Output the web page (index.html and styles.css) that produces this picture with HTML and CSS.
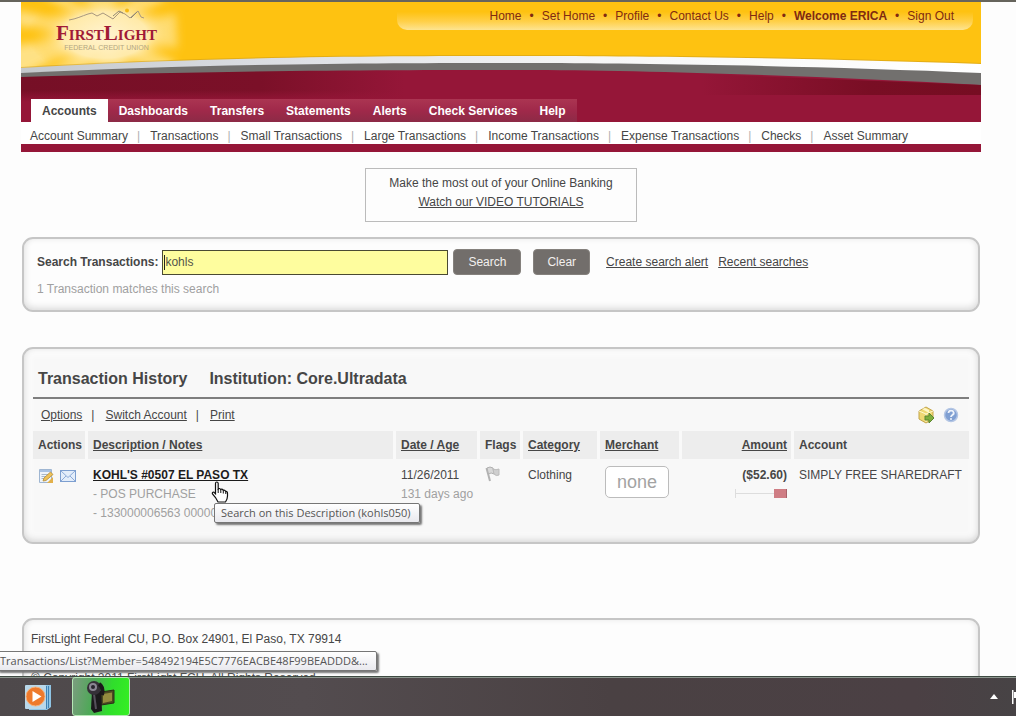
FILE: index.html
```html
<!DOCTYPE html>
<html lang="en">
<head>
<meta charset="utf-8">
<title>FirstLight Federal Credit Union - Transactions</title>
<link rel="stylesheet" href="styles.css">
</head>
<body>
<div class="viewport">
  <div class="page">
    <header class="banner">
      <svg class="banner-art" viewBox="0 0 960 120" preserveAspectRatio="none" aria-hidden="true">
        <defs>
          <linearGradient id="maroon" x1="0" x2="1" y1="0" y2="0">
            <stop offset="0" stop-color="#760f26"/><stop offset=".25" stop-color="#7b1028"/><stop offset=".4" stop-color="#951638"/><stop offset="1" stop-color="#951638"/>
          </linearGradient>
          <linearGradient id="shade" x1="0" x2="1" y1="0" y2="0">
            <stop offset="0" stop-color="#760d22" stop-opacity="0"/><stop offset=".6" stop-color="#760d22" stop-opacity=".9"/><stop offset="1" stop-color="#760d22"/>
          </linearGradient>
          <linearGradient id="fade" x1="0" x2="0" y1="0" y2="1">
            <stop offset="0" stop-color="#951638" stop-opacity="0"/><stop offset="1" stop-color="#951638"/>
          </linearGradient>
          <linearGradient id="silver" x1="0" x2="1" y1="0" y2="0">
            <stop offset="0" stop-color="#c4c8cc"/><stop offset=".3" stop-color="#dfe1e6"/><stop offset=".6" stop-color="#f6f6f6"/><stop offset="1" stop-color="#fff"/>
          </linearGradient>
          <radialGradient id="glow">
            <stop offset="0" stop-color="#fff3d0"/><stop offset=".55" stop-color="#ffedb4" stop-opacity=".9"/><stop offset="1" stop-color="#ffc20f" stop-opacity="0"/>
          </radialGradient>
          <filter id="soft" x="-20%" y="-40%" width="140%" height="180%"><feGaussianBlur stdDeviation="5"/></filter>
        </defs>
        <rect width="960" height="120" fill="#fec211"/>
        <g filter="url(#soft)" fill="#ffe79a" opacity=".85">
          <path d="M85 30L-10 44V75H0Z"/><path d="M85 30L14 80H58Z"/><path d="M85 30L70 80H118Z"/><path d="M85 30L135 76L155 60Z"/>
          <path d="M85 30L156 46L154 12Z"/><path d="M85 30L150 -6H112Z"/><path d="M85 30L98 -10H60Z"/><path d="M85 30L42 -10H16Z"/><path d="M85 30L-5 8V24Z"/>
        </g>
        <ellipse cx="84" cy="33" rx="78" ry="42" fill="url(#glow)"/>
        <path d="M0 65C200 53 380 53 500 53S800 55 960 61V120H0Z" fill="#c9981a" opacity=".5"/>
        <path d="M0 66C200 54 380 54 500 54S800 56 960 62V120H0Z" fill="url(#silver)"/>
        <path d="M0 71C200 61 380 61 500 61S800 64 960 71V120H0Z" fill="#72706e"/>
        <path d="M0 75C200 68 380 68 500 68S800 74 960 83V120H0Z" fill="url(#maroon)"/>
        <path d="M680 72L960 83V93H680Z" fill="url(#shade)"/>
        <rect y="88" width="420" height="12" fill="url(#fade)"/>
        <rect y="100" width="420" height="20" fill="#951638"/>
      </svg>
      <div class="banner-top">
        <a class="logo" href="#">
          <svg class="logo-hills" viewBox="0 0 78 14" aria-hidden="true">
            <circle cx="59" cy="2.6" r="2" fill="#f5b914"/>
            <path d="M1 12C8 11 14 8 20 6L24 5L29 8L35 5L40 8L45 11L52 4L57 6L62 10L70 3L73 9L76 10" fill="none" stroke="#a8977e" stroke-width="1"/>
            <path d="M45 8L51 3L55 5M63 10L69 4" fill="none" stroke="#8f8775" stroke-width="1"/>
          </svg>
          <span class="logo-name">FirstLight</span>
          <span class="logo-sub">FEDERAL CREDIT UNION</span>
        </a>
        <nav class="utility" aria-label="Utility">
          <a href="#">Home</a><span>•</span><a href="#">Set Home</a><span>•</span><a href="#">Profile</a><span>•</span><a href="#">Contact Us</a><span>•</span><a href="#">Help</a><span>•</span><b>Welcome ERICA</b><span>•</span><a href="#">Sign Out</a>
        </nav>
      </div>
      <nav class="tabs" aria-label="Main">
        <a class="active" href="#">Accounts</a><a href="#">Dashboards</a><a href="#">Transfers</a><a href="#">Statements</a><a href="#">Alerts</a><a href="#">Check Services</a><a href="#">Help</a>
      </nav>
    </header>
    <nav class="subnav" aria-label="Accounts">
      <a href="#">Account Summary</a><span>|</span><a href="#">Transactions</a><span>|</span><a href="#">Small Transactions</a><span>|</span><a href="#">Large Transactions</a><span>|</span><a href="#">Income Transactions</a><span>|</span><a href="#">Expense Transactions</a><span>|</span><a href="#">Checks</a><span>|</span><a href="#">Asset Summary</a>
    </nav>

    <aside class="promo">
      <p>Make the most out of your Online Banking</p>
      <a href="#">Watch our VIDEO TUTORIALS</a>
    </aside>

    <form class="panel search">
      <div class="search-row">
        <label for="q">Search Transactions:</label>
        <div class="field"><input id="q" type="text" value="kohls"><i class="caret"></i></div>
        <button class="btn" type="button">Search</button>
        <button class="btn btn-clear" type="button">Clear</button>
        <a class="alert-link" href="#">Create search alert</a>
        <a href="#">Recent searches</a>
      </div>
      <p class="result">1 Transaction matches this search</p>
    </form>

    <section class="panel history">
      <div class="titles">
        <h2>Transaction History</h2>
        <h2>Institution: Core.Ultradata</h2>
      </div>
      <div class="toolbar">
        <a href="#">Options</a><span>|</span><a href="#">Switch Account</a><span>|</span><a href="#">Print</a>
        <div class="tools">
          <svg width="18" height="18" viewBox="0 0 18 18" role="img" aria-label="Export">
            <path d="M2 5L9 1L16 5V13L9 17L2 13Z" fill="#efd873" stroke="#c4a54a"/>
            <path d="M2 5L9 8L16 5M9 8V16" fill="none" stroke="#fff8d0"/>
            <path d="M5 3L12 7L12 4L8 2Z" fill="#fff7c8"/>
            <path d="M8 10H12V7L17 12L12 17V14H8Z" fill="#7fae3c" stroke="#5c8730"/>
          </svg>
          <svg width="16" height="16" viewBox="0 0 16 16" role="img" aria-label="Help">
            <circle cx="8" cy="8" r="6.5" fill="#7f9fd2" stroke="#b4c6e4" stroke-width="1.5"/>
            <path d="M5.500 6a2.600 2.400 0 1 1 3.600 2.200Q8 9 8 10" fill="none" stroke="#eef3fb" stroke-width="1.800"/>
            <circle cx="8" cy="12" r="1" fill="#eef3fb"/>
          </svg>
        </div>
      </div>
      <table>
        <colgroup><col class="c-act"><col><col class="c-date"><col class="c-flag"><col class="c-cat"><col class="c-mer"><col class="c-amt"><col class="c-acc"></colgroup>
        <thead>
          <tr><th>Actions</th><th><a href="#">Description / Notes</a></th><th><a href="#">Date / Age</a></th><th>Flags</th><th><a href="#">Category</a></th><th><a href="#">Merchant</a></th><th class="num"><a href="#">Amount</a></th><th>Account</th></tr>
        </thead>
        <tbody>
          <tr>
            <td><div class="actions">
              <svg width="16" height="16" viewBox="0 0 16 16" role="img" aria-label="Edit">
                <path d="M1.500 1.500H13.500V14.500H1.500Z" fill="#eef4fb" stroke="#9fb6d2"/>
                <path d="M2 2H13V4H2Z" fill="#a9c3e4"/><path d="M3.500 6.500H11M3.500 8.500H9M3.500 10.500H7" stroke="#a8b8c8"/>
                <path d="M5 13L6 10L12.500 4L15 6.500L8 12.500Z" fill="#efc257" stroke="#b58b35" stroke-width=".8"/><path d="M9 15L15 9V15Z" fill="#e2b04a"/>
              </svg>
              <svg width="16" height="12" viewBox="0 0 16 12" role="img" aria-label="Mail">
                <rect x=".5" y=".5" width="15" height="11" fill="#e3edfa" stroke="#7d9fd0"/>
                <path d="M1 1L8 7.500L15 1M1 11L6 6M15 11L10 6" fill="none" stroke="#8cabd8"/>
              </svg>
            </div></td>
            <td>
              <div class="desc">
                <a class="payee" href="#">KOHL'S #0507 EL PASO TX</a>
                <p>- POS PURCHASE</p>
                <p>- 133000006563 000000</p>
                <div class="tooltip" role="tooltip">Search on this Description (kohls050)</div>
                <svg class="cursor" width="18" height="22" viewBox="0 0 18 22" aria-hidden="true">
                  <path d="M4.500 2.500Q4.500 1 5.800 1T7.200 2.500V8Q8.500 6.800 9.700 8.500Q11 7.500 12.200 9.200Q13.800 8.500 14.800 10.500Q16.500 10.200 16.500 12.500V15Q16.500 18 14.500 21H7L4.500 16.500L1.500 13Q.8 11 2.800 11L4.500 12.800Z" fill="#fff" stroke="#111" stroke-width="1.200"/>
                  <path d="M7.200 8V12M9.800 8.500V12M12.300 9.200V12.500M14.800 10.500V13" stroke="#111" fill="none"/>
                </svg>
              </div>
            </td>
            <td>11/26/2011<p class="muted">131 days ago</p></td>
            <td><svg width="16" height="16" viewBox="0 0 16 16" role="img" aria-label="Flag">
              <path d="M1.500 2L5 15" stroke="#b2b2b2" stroke-width="2"/><path d="M2 2Q5 0 8 2L9 8Q6 6 3.500 8Z" fill="#d8d8d8" stroke="#b0b0b0"/><path d="M8 3Q11 4.500 14 3V9Q11 10.500 9 8Z" fill="#cfcfcf" stroke="#bbb"/>
            </svg></td>
            <td>Clothing</td>
            <td><button class="none" type="button">none</button></td>
            <td class="num"><b>($52.60)</b><div class="meter"><i></i></div></td>
            <td>SIMPLY FREE SHAREDRAFT</td>
          </tr>
        </tbody>
      </table>
    </section>

    <footer class="panel foot">
      <p>FirstLight Federal CU, P.O. Box 24901, El Paso, TX 79914</p>
      <p class="copyright">© Copyright 2011 FirstLight FCU, All Rights Reserved.</p>
    </footer>
  </div>
  <div class="status">Transactions/List?Member=548492194E5C7776EACBE48F99BEADDD&amp;...</div>
</div>

<div class="taskbar">
  <button class="task" type="button" aria-label="Media player">
    <svg width="26" height="26" viewBox="0 0 26 26" aria-hidden="true">
      <path d="M4 1H26V23L22 26H4Z" fill="#8fc4e4"/><path d="M21.500 2V25M23.500 2V24" stroke="#3f82b4"/>
      <rect width="21" height="24" y="1" rx="1" fill="#b9d8ea"/>
      <circle cx="10.500" cy="12.500" r="9.500" fill="#ee7a2c" stroke="#f6b27c"/><path d="M7.500 7L16.500 12.500L7.500 18Z" fill="#fff"/>
    </svg>
  </button>
  <button class="task task-active" type="button" aria-label="Camcorder">
    <svg width="30" height="34" viewBox="0 0 30 34" aria-hidden="true">
      <path d="M15 12L28 10V23L15 25Z" fill="#4b4a22" stroke="#2b2e18"/><path d="M17 14L26 12.500V21L17 23Z" fill="#938b3f"/>
      <path d="M6 11H15L16 31L8 33L5 29Z" fill="#1b191b"/><path d="M8 14L10 29" stroke="#55505a" stroke-width="2"/>
      <circle cx="8" cy="8" r="7" fill="#353037"/><circle cx="7" cy="7" r="4" fill="#8b8694"/><circle cx="7" cy="7" r="2" fill="#29242e"/>
      <path d="M13 4Q18 7 16 15" fill="none" stroke="#1b191b" stroke-width="4"/>
    </svg>
  </button>
  <div class="tray">
    <svg width="8" height="5" viewBox="0 0 8 5" aria-hidden="true"><path d="M4 0L8 5H0Z" fill="#fff"/></svg>
    <svg width="4" height="14" viewBox="0 0 4 14" aria-hidden="true"><path d="M0 0H1.500V14H0ZM2 2H4V8H2Z" fill="#fff"/></svg>
  </div>
</div>
</body>
</html>
```
FILE: styles.css
```css
* { box-sizing: border-box; }

body {
  margin: 0;
  height: 100vh;
  display: flex;
  flex-direction: column;
  background: #fdfdfd;
  color: #464646;
  font: 12px/19px "Liberation Sans", Arial, sans-serif;
}

p, h2 { margin: 0; }
a { color: inherit; }
nav a { text-decoration: none; }
button, input { font: inherit; }
svg { display: block; }

.viewport {
  flex: 1;
  min-height: 0;
  position: relative;
  overflow: hidden;
  border-top: 2px solid #66645c;
}

.page { padding: 0 35px 0 21px; }

/* Banner */
.banner {
  position: relative;
  min-height: 120px;
  display: flex;
  flex-direction: column;
  justify-content: space-between;
}

.banner-art {
  position: absolute;
  inset: 0;
  width: 100%;
  height: 100%;
}

.banner-top {
  position: relative;
  display: flex;
  justify-content: space-between;
  align-items: flex-start;
}

.logo {
  display: flex;
  flex-direction: column;
  align-items: center;
  margin-left: 35px;
  padding-top: 6px;
  text-decoration: none;
}

.logo-hills { width: 78px; height: 14px; }

.logo-name {
  color: #a01a36;
  font: bold small-caps 21px/22px "Liberation Serif", serif;
}

.logo-sub {
  color: #b3a682;
  font-size: 7px;
  line-height: 8px;
}

.utility {
  width: 60%;
  display: flex;
  justify-content: flex-end;
  gap: 8px;
  margin-right: 8px;
  padding: 5px 19px 4px 0;
  border-radius: 0 0 10px 10px;
  background: linear-gradient(transparent 35%, #ffd04a 70%, #fde491);
  color: #802a10;
  white-space: nowrap;
}

.tabs {
  position: relative;
  display: flex;
  align-self: flex-start;
  margin-left: 10px;
  background: linear-gradient(#ab3552, #a0294a 50%, #8c2a46);
  color: #fff;
  font-weight: bold;
}

.tabs a { padding: 2px 11px 0; line-height: 21px; }
.tabs .active { background: #fff; color: #464646; }

.subnav {
  display: flex;
  gap: 9px;
  padding: 6px 9px 0;
  line-height: 16px;
  background: #fff;
  border-bottom: 8px solid #951638;
  white-space: nowrap;
}

.subnav span { color: #b0b0b0; padding-right: 1px; }

.promo {
  width: 272px;
  margin: 16px auto 15px;
  padding: 5px 0 9px;
  border: 1px solid #bbb;
  text-align: center;
}

/* Panels */
.panel {
  margin: 0 1px;
  border: 2px solid #c6c6c6;
  border-radius: 11px;
  background: #fdfdfd;
  box-shadow: inset 0 -2px 7px #d8d8d8;
}

.search { padding: 10px 13px 11px; }

.search-row {
  display: flex;
  align-items: center;
  white-space: nowrap;
}

.search label { font-weight: bold; }

.field {
  position: relative;
  width: 286px;
  margin: 0 5px 0 4px;
}

.field input {
  display: block;
  width: 100%;
  height: 25px;
  padding: 0 2px;
  border: 1px solid #4a4a32;
  border-radius: 0;
  background: #fefd9e;
  color: #55554a;
}

.caret {
  position: absolute;
  left: 2px;
  top: 5px;
  width: 1px;
  height: 15px;
  background: #222;
}

.btn {
  height: 26px;
  padding: 0 14px;
  border: 1px solid #85817d;
  border-radius: 4px;
  background: #726e6b;
  color: #f2f0ee;
}

.btn-clear { margin: 0 16px 0 12px; padding: 0 13px; }
.alert-link { margin-right: 10px; }
.result { margin-top: 5px; color: #a0a0a0; }

.history {
  margin-top: 35px;
  margin-bottom: 74px;
  padding: 12px 9px 19px;
  background: #f8f8f8;
  box-shadow: inset 0 -2px 7px #d4d4d4, inset 0 0 5px 7px #fcfcfc;
}

.titles {
  display: flex;
  gap: 22px;
  padding: 8px 5px;
  border-bottom: 2px solid #7e7e7e;
}

h2 { font-size: 16px; line-height: 20px; }

.toolbar {
  display: flex;
  align-items: center;
  height: 32px;
  padding: 0 10px 0 8px;
}

.toolbar span { margin: 0 11px 0 9px; }

.tools {
  display: flex;
  align-items: center;
  gap: 8px;
  margin-left: auto;
}

table {
  width: 100%;
  table-layout: fixed;
  border-collapse: separate;
  border-spacing: 0;
}

.c-act { width: 55px; }
.c-date { width: 84px; }
.c-flag { width: 43px; }
.c-cat { width: 77px; }
.c-mer { width: 82px; }
.c-amt { width: 112px; }
.c-acc { width: 175px; }

th, td {
  padding: 7px 2px 0 5px;
  border-right: 3px solid #f9f9f9;
  text-align: left;
  vertical-align: top;
  white-space: nowrap;
}

th {
  height: 28px;
  padding-top: 5px;
  padding-bottom: 4px;
  background: #ededed;
}

td { border-color: transparent; }
th:last-child, td:last-child { border-right: 0; }
.num { text-align: right; padding-right: 4px; }

.actions {
  display: flex;
  align-items: center;
  gap: 6px;
  padding-top: 2px;
}

.desc { position: relative; color: #a0a0a0; }
.payee { color: #1c1c1c; font-weight: bold; }
.muted { color: #a0a0a0; }

.none {
  width: 64px;
  height: 32px;
  padding: 0;
  border: 1px solid #bcbcbc;
  border-radius: 5px;
  background: #fff;
  color: #a3a3a3;
  font-size: 18px;
}

.meter {
  width: 52px;
  height: 9px;
  margin: 4px 0 0 auto;
  border-left: 1px solid #ddd;
  background: linear-gradient(#ddd, #ddd) center / 100% 1px no-repeat;
}

.meter i {
  display: block;
  width: 13px;
  height: 9px;
  margin-left: auto;
  background: #cf7d84;
  border-right: 1px solid #a8626a;
}

.tooltip, .status {
  position: absolute;
  border: 1px solid #767676;
  border-radius: 2px;
  background: linear-gradient(#fff, #e9e9ee);
  box-shadow: 2px 2px 2px #777;
  color: #555;
  font: 11px/18px "Open Sans", "Noto Sans", sans-serif;
  white-space: nowrap;
}

.tooltip { left: 121px; top: 37px; padding: 0 8px 0 6px; }
.cursor { position: absolute; left: 118px; top: 15px; }
.status { left: -3px; bottom: 5px; padding: 0 8px 0 2px; }

.foot { padding: 10px 7px 20px; }
.copyright { margin-top: 20px; }

/* Taskbar */
.taskbar {
  display: flex;
  align-items: center;
  height: 40px;
  padding-left: 25px;
  border-top: 1px solid #3e4a42;
  background: linear-gradient(90deg, #4e494b, #534c4f 30%, #4a4143 60%, #4b4044 90%, #474345);
  box-shadow: inset 0 1px #8d968f;
}

.task {
  display: grid;
  place-items: center;
  padding: 0;
  border: 0;
  background: none;
}

.task-active {
  width: 58px;
  height: 39px;
  margin-left: 21px;
  border: 1px solid #b5e8b5;
  border-radius: 3px;
  background: linear-gradient(100deg, #7c9c80, #4fa858 35%, #30dd2c 65%, #35f022);
}

.tray {
  display: flex;
  align-items: center;
  gap: 14px;
  margin-left: auto;
}
```
